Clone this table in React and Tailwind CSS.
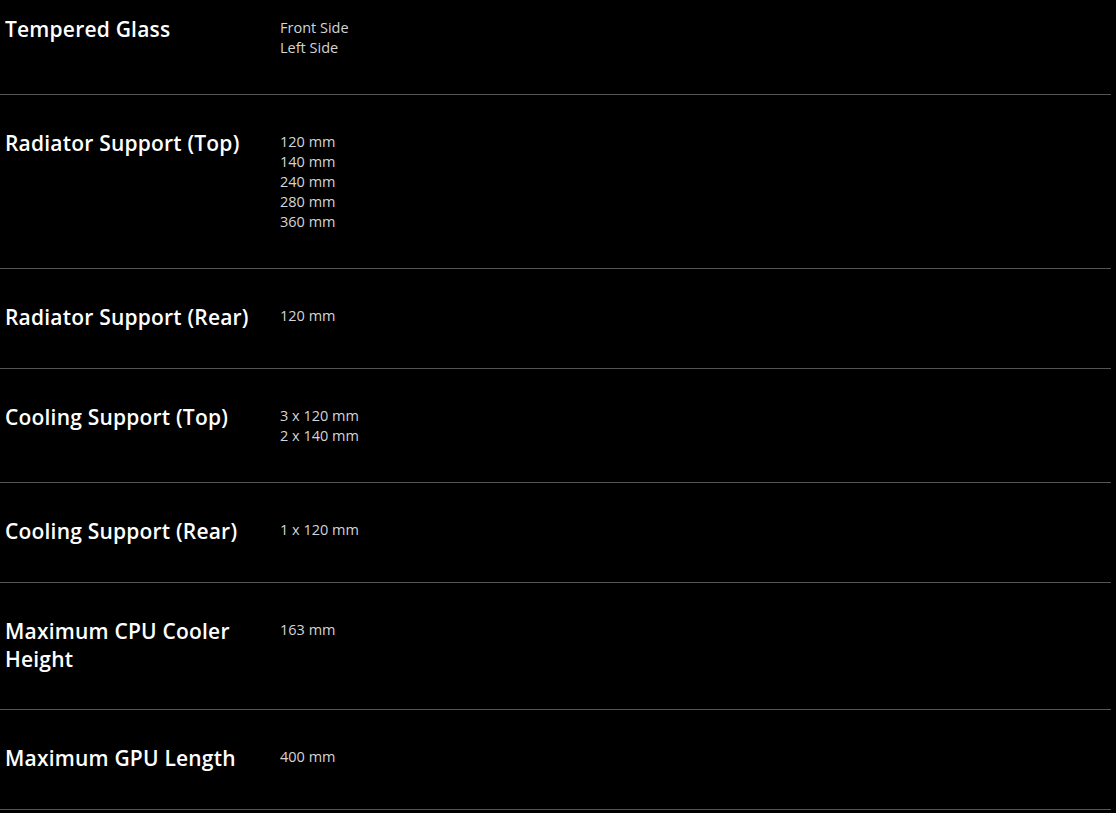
const specs = [
  { label: 'Tempered Glass', values: ['Front Side', 'Left Side'] },
  { label: 'Radiator Support (Top)', values: ['120 mm', '140 mm', '240 mm', '280 mm', '360 mm'] },
  { label: 'Radiator Support (Rear)', values: ['120 mm'] },
  { label: 'Cooling Support (Top)', values: ['3 x 120 mm', '2 x 140 mm'] },
  { label: 'Cooling Support (Rear)', values: ['1 x 120 mm'] },
  { label: 'Maximum CPU Cooler Height', values: ['163 mm'] },
  { label: 'Maximum GPU Length', values: ['400 mm'] },
];

const SpecRow = ({ label, values }) => (
  <div className="flex border-b border-[#555555] pt-[34px] pb-[36px]">
    <div className="w-[280px] min-h-[29px] pl-[5px] pr-[25px] text-[21px] leading-[28px] font-semibold tracking-[0.2px] text-white font-['Open_Sans',sans-serif]">
      {label}
    </div>
    <div className="mt-[3px] text-[14.5px] leading-[20px] text-[#d4d4d4] font-['Open_Sans',sans-serif]">
      {values.map((v) => (
        <div key={v}>{v}</div>
      ))}
    </div>
  </div>
);

export default function App() {
  return (
    <div className="h-[813px] overflow-hidden bg-black">
      <div className="w-[1111px] -mt-[19px]">
        {specs.map((s) => (
          <SpecRow key={s.label} {...s} />
        ))}
      </div>
    </div>
  );
}
